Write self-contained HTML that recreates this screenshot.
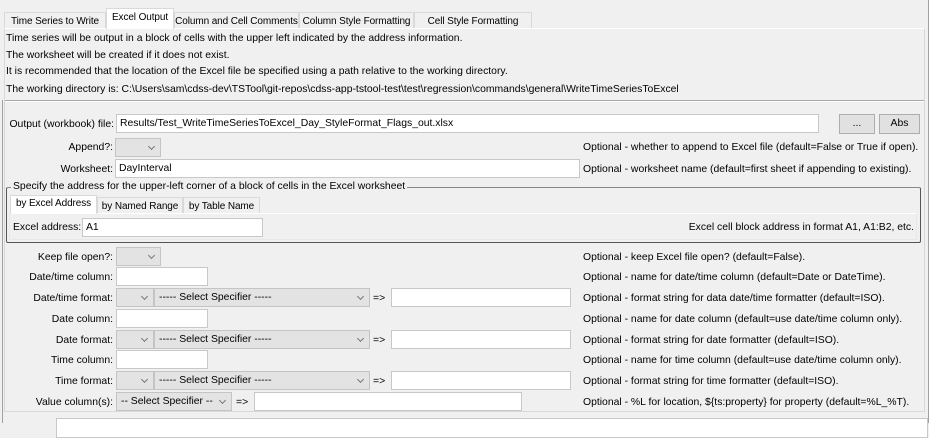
<!DOCTYPE html>
<html><head><style>
*{box-sizing:border-box;margin:0;padding:0}
body{width:929px;height:423px;background:#f0f0f0;font-family:"Liberation Sans",sans-serif;font-size:10.4px;color:#000;position:relative;overflow:hidden}
div{white-space:nowrap}
.a{position:absolute}
.tab{position:absolute;top:12px;height:17px;border:1px solid #d9d9d9;border-bottom:none;background:#f0f0f0;padding:3px 0 0 0;text-align:center;font-size:10px;letter-spacing:-0.1px}
.sel{top:8px;height:21px;background:#fff;padding-top:3px}
.in{position:absolute;background:#fff;border:1px solid #c8c8c8;height:19px;padding:3px 3px;overflow:hidden}
.cb{position:absolute;background:#e3e3e3;border:1px solid #c4c4c4;height:19px;padding:3px 4px;overflow:hidden}
.cb:after{content:"";position:absolute;right:6px;top:5px;width:4px;height:4px;border-right:1px solid #777;border-bottom:1px solid #777;transform:rotate(45deg)}
.btn{position:absolute;background:#e1e1e1;border:1px solid #adadad;height:20px;text-align:center;padding-top:3px}
.l{position:absolute;text-align:right}
.h{position:absolute;left:583px}
</style></head><body>
<div class="a" style="left:928px;top:0;width:1px;height:423px;background:#a0a0a0"></div>
<div class="a" style="left:2px;top:100px;width:1px;height:323px;background:#a0a0a0"></div>
<div class="tab" style="left:4px;width:102px">Time Series to Write</div>
<div class="tab" style="left:174px;width:125px">Column and Cell Comments</div>
<div class="tab" style="left:299px;width:115px">Column Style Formatting</div>
<div class="tab" style="left:414px;width:118px">Cell Style Formatting</div>
<div class="a" style="left:4px;top:28px;width:921px;height:384px;border:1px solid #d9d9d9;border-top-color:#fff"></div>
<div class="tab sel" style="left:106px;width:68px">Excel Output</div>
<div class="a" style="left:6px;top:33px">Time series will be output in a block of cells with the upper left indicated by the address information.</div>
<div class="a" style="left:6px;top:50px">The worksheet will be created if it does not exist.</div>
<div class="a" style="left:6px;top:66px">It is recommended that the location of the Excel file be specified using a path relative to the working directory.</div>
<div class="a" style="left:6px;top:84px">The working directory is: C:\Users\sam\cdss-dev\TSTool\git-repos\cdss-app-tstool-test\test\regression\commands\general\WriteTimeSeriesToExcel</div>
<div class="a" style="left:5px;top:100px;width:919px;height:1px;background:#a8a8a8"></div>
<div class="a" style="left:5px;top:101px;width:919px;height:1px;background:#fff"></div>
<div class="l" style="left:0;width:114px;top:119px">Output (workbook) file:</div>
<div class="in" style="left:116px;top:114px;width:703px">Results/Test_WriteTimeSeriesToExcel_Day_StyleFormat_Flags_out.xlsx</div>
<div class="btn" style="left:839px;top:114px;width:36px">...</div>
<div class="btn" style="left:879px;top:114px;width:41px">Abs</div>
<div class="l" style="left:0;width:113px;top:142px">Append?:</div>
<div class="cb" style="left:115px;top:138px;width:46px"></div>
<div class="h" style="top:142px">Optional - whether to append to Excel file (default=False or True if open).</div>
<div class="l" style="left:0;width:113px;top:164px">Worksheet:</div>
<div class="in" style="left:115px;top:159px;width:465px">DayInterval</div>
<div class="h" style="top:164px">Optional - worksheet name (default=first sheet if appending to existing).</div>
<div class="a" style="left:6px;top:187px;width:915px;height:56px;border:1px solid #555;border-top-color:#888;border-radius:2px"></div>
<div class="a" style="left:11px;top:181px;background:#f0f0f0;padding:0 2px">Specify the address for the upper-left corner of a block of cells in the Excel worksheet</div>
<div class="tab" style="left:97px;top:197px;width:86px;height:17px">by Named Range</div>
<div class="tab" style="left:183px;top:197px;width:77px;height:17px">by Table Name</div>
<div class="a" style="left:9px;top:213px;width:908px;height:27px;border:1px solid #e8e8e8;border-top-color:#fff"></div>
<div class="tab sel" style="left:10px;top:195px;width:87px;height:19px;padding-top:2px">by Excel Address</div>
<div class="a" style="left:13px;top:222px">Excel address:</div>
<div class="in" style="left:82px;top:218px;width:181px">A1</div>
<div class="a" style="right:15px;top:222px">Excel cell block address in format A1, A1:B2, etc.</div>

<div class="l" style="left:0;width:113px;top:252px">Keep file open?:</div>
<div class="cb" style="left:116px;top:247px;width:45px"></div>
<div class="h" style="top:252px">Optional - keep Excel file open? (default=False).</div>

<div class="l" style="left:0;width:113px;top:272px">Date/time column:</div>
<div class="in" style="left:116px;top:267px;width:92px"></div>
<div class="h" style="top:272px">Optional - name for date/time column (default=Date or DateTime).</div>

<div class="l" style="left:0;width:113px;top:293px">Date/time format:</div>
<div class="cb" style="left:116px;top:288px;width:38px"></div>
<div class="cb" style="left:154px;top:288px;width:216px">----- Select Specifier -----</div>
<div class="a" style="left:373px;top:293px">=&gt;</div>
<div class="in" style="left:391px;top:288px;width:180px"></div>
<div class="h" style="top:293px">Optional - format string for data date/time formatter (default=ISO).</div>

<div class="l" style="left:0;width:113px;top:314px">Date column:</div>
<div class="in" style="left:116px;top:309px;width:92px"></div>
<div class="h" style="top:314px">Optional - name for date column (default=use date/time column only).</div>

<div class="l" style="left:0;width:113px;top:335px">Date format:</div>
<div class="cb" style="left:116px;top:330px;width:38px"></div>
<div class="cb" style="left:154px;top:330px;width:216px">----- Select Specifier -----</div>
<div class="a" style="left:373px;top:335px">=&gt;</div>
<div class="in" style="left:391px;top:330px;width:180px"></div>
<div class="h" style="top:335px">Optional - format string for date formatter (default=ISO).</div>

<div class="l" style="left:0;width:113px;top:355px">Time column:</div>
<div class="in" style="left:116px;top:350px;width:92px"></div>
<div class="h" style="top:355px">Optional - name for time column (default=use date/time column only).</div>

<div class="l" style="left:0;width:113px;top:376px">Time format:</div>
<div class="cb" style="left:116px;top:371px;width:38px"></div>
<div class="cb" style="left:154px;top:371px;width:216px">----- Select Specifier -----</div>
<div class="a" style="left:373px;top:376px">=&gt;</div>
<div class="in" style="left:391px;top:371px;width:180px"></div>
<div class="h" style="top:376px">Optional - format string for time formatter (default=ISO).</div>

<div class="l" style="left:0;width:113px;top:397px">Value column(s):</div>
<div class="cb" style="left:116px;top:392px;width:116px;padding-right:16px">-- Select Specifier --</div>
<div class="a" style="left:236px;top:397px">=&gt;</div>
<div class="in" style="left:254px;top:392px;width:268px"></div>
<div class="h" style="top:397px">Optional - %L for location, ${ts:property} for property (default=%L_%T).</div>

<div class="in" style="left:56px;top:418px;width:872px;height:20px"></div>
</body></html>
